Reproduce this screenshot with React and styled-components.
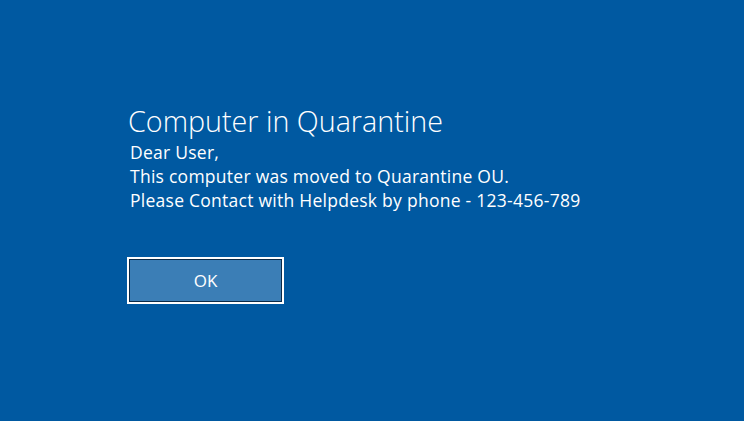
import React from "react";
import styled, { createGlobalStyle } from "styled-components";

const Global = createGlobalStyle`
  html, body { margin: 0; padding: 0; background: #0059a1; }
  body { font-family: "Open Sans", "Noto Sans", sans-serif; }
`;

const Screen = styled.div`
  width: 744px;
  height: 421px;
  background: #0059a1;
  box-sizing: border-box;
  padding: 103px 0 0 128px;
  color: #ffffff;
  display: flex;
  flex-direction: column;
  align-items: flex-start;
`;

const Title = styled.h1`
  margin: 0;
  font-family: "Open Sans", sans-serif;
  font-weight: 300;
  font-size: 28.7px;
  line-height: 36px;
`;

const Body = styled.div`
  margin: 1px 0 0 2px;
  font-size: 17.5px;
  line-height: 24px;
  letter-spacing: 0.26px;
`;

const Line = styled.div``;

const Button = styled.button`
  margin-top: 45px;
  margin-left: -1px;
  width: 157px;
  height: 47px;
  box-sizing: border-box;
  border: 2px solid #ffffff;
  box-shadow: inset 0 0 0 1px #0a2a48;
  background: #3b7eb6;
  color: #ffffff;
  font-family: "Open Sans", sans-serif;
  font-size: 17px;
  padding: 0;
  cursor: pointer;
`;

export default function App() {
  return (
    <>
      <Global />
      <Screen>
        <Title>Computer in Quarantine</Title>
        <Body>
          <Line>Dear User,</Line>
          <Line>This computer was moved to Quarantine OU.</Line>
          <Line>Please Contact with Helpdesk by phone - 123-456-789</Line>
        </Body>
        <Button>OK</Button>
      </Screen>
    </>
  );
}
